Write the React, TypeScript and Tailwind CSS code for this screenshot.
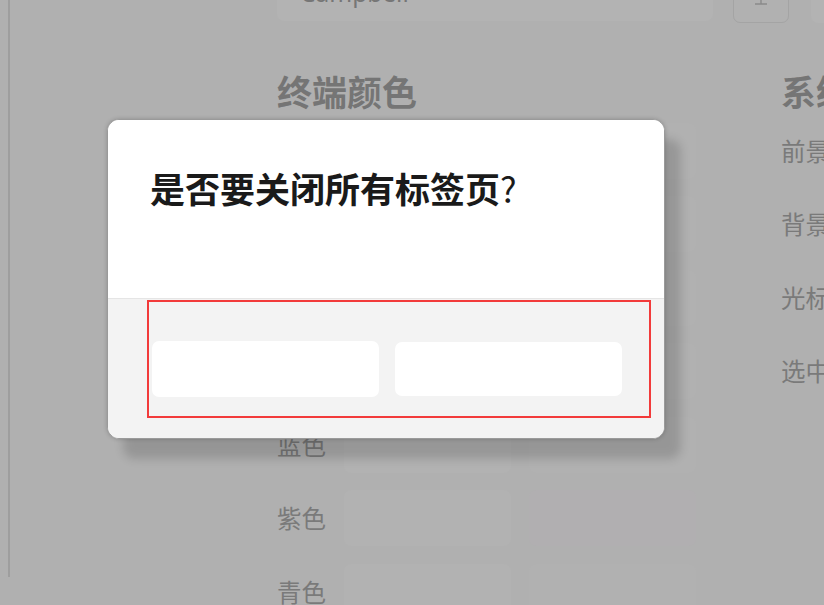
import React from "react";

const leftRows = ["黑色", "红色", "绿色", "黄色", "蓝色", "紫色", "青色", "白色"];
const rightRows = ["前景", "背景", "光标颜色", "选中内容背景"];

export default function App() {
  return (
    <div
      className="relative w-[824px] h-[605px] overflow-hidden bg-[#b0b0b0]"
      style={{ fontFamily: '"Noto Sans CJK SC", "Noto Sans", sans-serif' }}
    >
      <div className="flex">
        <div className="ml-[8px] w-[2px] h-[577px] bg-[#9e9e9e] shrink-0" />
        <div className="ml-[267px] flex flex-col shrink-0">
          {/* top row */}
          <div className="flex mt-[-35px]">
            <div className="w-[436px] h-[56px] rounded-[7px] bg-[#b3b3b3] flex items-center px-[23px]">
              <span className="text-[24.5px] text-[#767676] leading-none" style={{ fontFamily: '"Noto Sans", "Open Sans", sans-serif' }}>
                Campbell
              </span>
            </div>
            <div className="ml-[20px] w-[56px] h-[58px] rounded-[7px] border border-[#a4a4a4] bg-[#b1b1b1] flex items-end justify-center pb-[16px]">
              <svg width="18" height="8" viewBox="0 0 18 8" className="mb-[-1px]">
                <path d="M9 0 V5 M3 5 H15" stroke="#8a8a8a" strokeWidth="1.4" fill="none" />
              </svg>
            </div>
            <div className="ml-[22px] w-[56px] h-[58px] rounded-[7px] bg-[#b3b3b3]" />
          </div>

          <div className="flex mt-[45px]">
            {/* left section */}
            <div className="w-[419px] shrink-0 flex flex-col">
              <div className="h-[46px] leading-[46px] text-[35px] font-bold text-[#757575]">终端颜色</div>
              {leftRows.map((r, i) => (
                <div key={r} className="h-[73.5px] flex items-center">
                  <div className="w-[67px] text-[24.5px] text-[#7a7a7a] leading-none">{r}</div>
                  <div className="w-[167px] h-[56px] rounded-[7px] bg-[#b2b2b2]" />
                  <div className={"ml-[18px] w-[167px] h-[56px] rounded-[7px] " + (i === 5 ? "bg-[#b1afb1]" : "bg-[#b1b1b1]")} />
                </div>
              ))}
            </div>
            {/* right section */}
            <div className="ml-[85px] w-[400px] shrink-0 flex flex-col">
              <div className="h-[46px] leading-[46px] text-[35px] font-bold text-[#757575] whitespace-nowrap">系统颜色</div>
              {rightRows.map((r) => (
                <div key={r} className="h-[73.5px] flex items-center">
                  <div className="text-[24.5px] text-[#7a7a7a] leading-none whitespace-nowrap">{r}</div>
                </div>
              ))}
            </div>
          </div>
        </div>
      </div>

      {/* dialog */}
      <div className="absolute left-[107px] top-[119px] w-[558px] h-[320px] rounded-[12px] overflow-hidden border border-[#9a9a9a] bg-white shadow-[0_0_4px_rgba(0,0,0,0.2),16px_20px_10px_rgba(0,0,0,0.15)] flex flex-col">
        <div className="h-[178px] shrink-0 bg-white pt-[42px] pl-[42px]">
          <div className="text-[35px] font-bold text-[#1a1a1a] leading-[52px] whitespace-nowrap">
            是否要关闭所有标签页<span className="font-normal">?</span>
          </div>
        </div>
        <div className="h-px bg-[#e5e5e5] shrink-0" />
        <div className="flex-1 bg-[#f3f3f3] flex items-start gap-[16px] pl-[44px] pr-[42px] pt-[42px]">
          <div className="flex-1 h-[56px] rounded-[7px] bg-white" />
          <div className="flex-1 h-[54px] mt-[1px] rounded-[7px] bg-white" />
        </div>
        <div className="absolute left-[39px] top-[180px] w-[504px] h-[118px] border-2 border-[#f23a3a] pointer-events-none" />
      </div>
    </div>
  );
}
